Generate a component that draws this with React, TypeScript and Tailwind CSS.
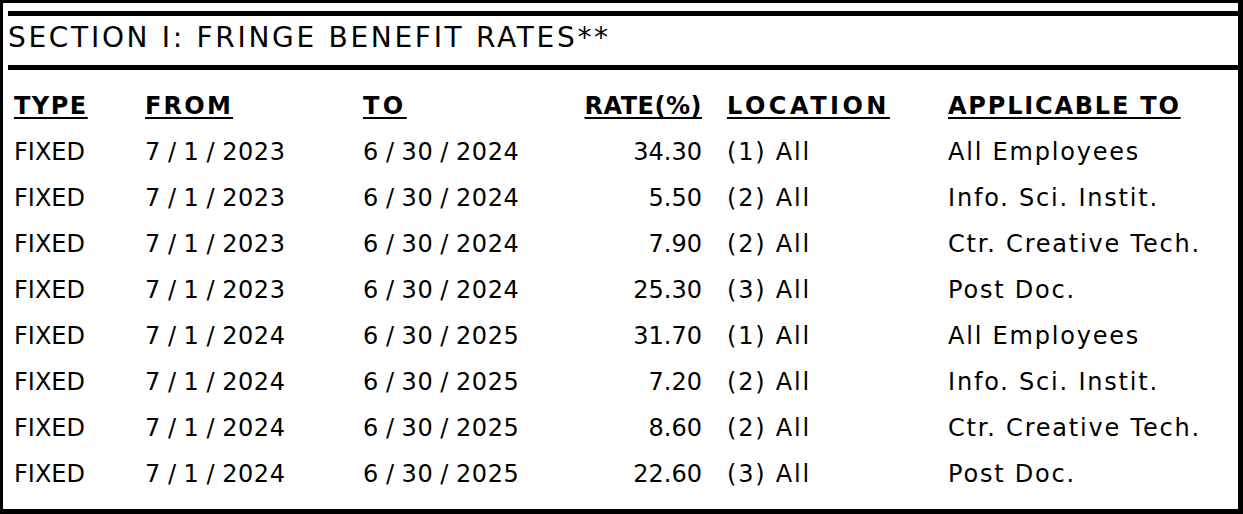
const rows = [
  { type: "FIXED", from: "7/1/2023", to: "6/30/2024", rate: "34.30", loc: "(1) All", applies: "All Employees" },
  { type: "FIXED", from: "7/1/2023", to: "6/30/2024", rate: "5.50", loc: "(2) All", applies: "Info. Sci. Instit." },
  { type: "FIXED", from: "7/1/2023", to: "6/30/2024", rate: "7.90", loc: "(2) All", applies: "Ctr. Creative Tech." },
  { type: "FIXED", from: "7/1/2023", to: "6/30/2024", rate: "25.30", loc: "(3) All", applies: "Post Doc." },
  { type: "FIXED", from: "7/1/2024", to: "6/30/2025", rate: "31.70", loc: "(1) All", applies: "All Employees" },
  { type: "FIXED", from: "7/1/2024", to: "6/30/2025", rate: "7.20", loc: "(2) All", applies: "Info. Sci. Instit." },
  { type: "FIXED", from: "7/1/2024", to: "6/30/2025", rate: "8.60", loc: "(2) All", applies: "Ctr. Creative Tech." },
  { type: "FIXED", from: "7/1/2024", to: "6/30/2025", rate: "22.60", loc: "(3) All", applies: "Post Doc." },
];

const cols = "grid grid-cols-[131px_218px_197px_142px_246px_1fr]";

function DateText({ value }: { value: string }) {
  const parts = value.split("/");
  return (
    <span className="tracking-[0.6px]">
      {parts.map((p, i) => (
        <span key={i}>
          {i > 0 && <span className="mx-[7px]">/</span>}
          {p}
        </span>
      ))}
    </span>
  );
}

function Heading({ children, className = "" }: { children: string; className?: string }) {
  return (
    <div className={className}>
      <span className="font-bold underline decoration-2 underline-offset-[3px]">{children}</span>
    </div>
  );
}

export default function App() {
  return (
    <div className="w-[1243px] h-[514px] bg-white text-black font-['DejaVu_Sans',sans-serif] border-t-[3px] border-l-[3px] border-r-[5px] border-b-[5px] border-black">
      <div className="pl-[5px] pt-[8px]">
        <div className="border-y-[5px] border-black h-[59px]">
          <div className="text-[28px] leading-[43px] tracking-[2.7px] whitespace-nowrap">
            SECTION I: FRINGE BENEFIT RATES**
          </div>
        </div>
        <div className="pl-[6px] pt-[14px] text-[24px] whitespace-nowrap">
          <div className={`${cols} leading-[45px] tracking-[1.5px]`}>
            <Heading>TYPE</Heading>
            <Heading className="tracking-[2.2px]">FROM</Heading>
            <Heading className="tracking-[3.5px]">TO</Heading>
            <Heading className="text-right tracking-[0.5px]">RATE(%)</Heading>
            <Heading className="pl-[25px] tracking-[3.5px]">LOCATION</Heading>
            <Heading className="tracking-[1.8px]">APPLICABLE TO</Heading>
          </div>
          {rows.map((r, i) => (
            <div key={i} className={`${cols} leading-[46px]`}>
              <div>{r.type}</div>
              <div>
                <DateText value={r.from} />
              </div>
              <div>
                <DateText value={r.to} />
              </div>
              <div className="text-right">{r.rate}</div>
              <div className="pl-[25px] tracking-[1.8px]">{r.loc}</div>
              <div className="tracking-[1.8px]">{r.applies}</div>
            </div>
          ))}
        </div>
      </div>
    </div>
  );
}
